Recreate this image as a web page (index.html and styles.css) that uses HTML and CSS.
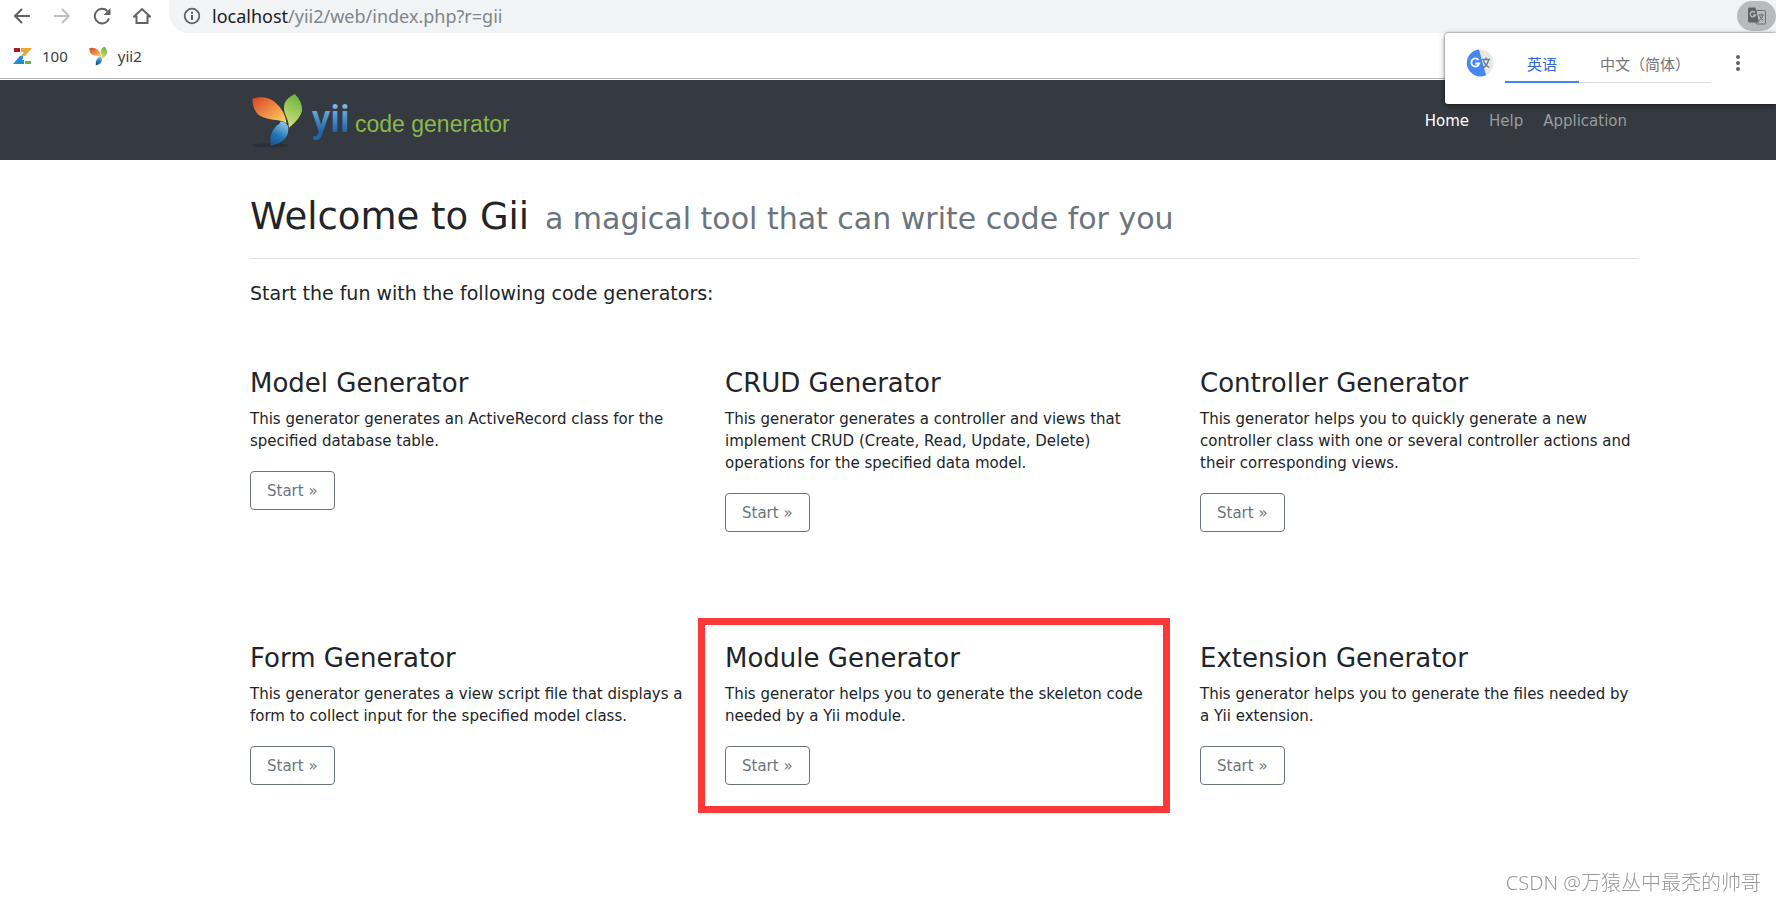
FILE: index.html
```html
<!DOCTYPE html>
<html lang="en">
<head>
    <meta charset="utf-8">
    <title>Welcome to Gii</title>
    <link rel="stylesheet" href="styles.css">
</head>
<body>
    <header class="browser">
        <div class="toolbar">
            <button class="tool" aria-label="Back">
                <svg width="18" height="18" viewBox="0 0 18 18" fill="none" stroke="#5f6368" stroke-width="2"><path d="M17 9H2M9 2L2 9l7 7"/></svg>
            </button>
            <button class="tool" aria-label="Forward">
                <svg width="18" height="18" viewBox="0 0 18 18" fill="none" stroke="#bdc1c6" stroke-width="2"><path d="M1 9h15M9 2l7 7-7 7"/></svg>
            </button>
            <button class="tool" aria-label="Reload">
                <svg width="18" height="18" viewBox="0 0 18 18"><path d="M16 11.5A7.3 7.3 0 1 1 14.300 4" fill="none" stroke="#5f6368" stroke-width="2"/><path d="M17.500 1v7h-7z" fill="#5f6368"/></svg>
            </button>
            <button class="tool" aria-label="Home">
                <svg width="18" height="18" viewBox="0 0 18 18" fill="none" stroke="#5f6368" stroke-width="2"><path d="M1 9.500L9 2l8 7.500H14.500V16h-11V9.500z"/></svg>
            </button>
            <div class="address">
                <svg width="18" height="18" viewBox="0 0 18 18"><circle cx="9" cy="9" r="7.300" fill="none" stroke="#5f6368" stroke-width="1.800"/><path d="M8 8h2v5H8zM8 4.800h2v2H8z" fill="#5f6368"/></svg>
                <span class="url"><span class="host">localhost</span>/yii2/web/index.php?r=gii</span>
                <button class="translate-toggle" aria-label="Translate this page">
                    <svg width="18" height="18" viewBox="0 0 18 18"><rect x="8" y="3.500" width="9.500" height="13.500" rx="1" fill="none" stroke="#6b6e72"/><path d="M1.500 0.500H7.500L11 15.500H1.500Q0 15.500 0 14V2Q0 .5 1.500 .5z" fill="#5f6368"/><path d="M7 5.500A2.700 2.700 0 1 0 7.500 8H5" fill="none" stroke="#b8babd" stroke-width="1.300"/><path d="M10.500 8H16M13.200 6.500V8M15 8q-1 4-4 5.500M11.500 8.500q1 3 4 5" fill="none" stroke="#6b6e72"/></svg>
                </button>
            </div>
        </div>
        <nav class="bookmarks">
            <a href="#">
                <svg width="20" height="20" viewBox="0 0 20 20"><path d="M2 2h6v4H2z" fill="#b0191e"/><path d="M9 2h11L13 10H9l3-4H9z" fill="#eaa82c"/><path d="M8 10h3v2l-1 2h2v4H1z" fill="#268ccb"/><path d="M13 15h6v3h-6z" fill="#6db33f"/></svg>
                100
            </a>
            <a href="#">
                <svg width="20" height="20" viewBox="32 50 156 166"><use href="#yii-mark"/></svg>
                yii2
            </a>
        </nav>
        <div class="translate">
            <svg width="28" height="28" viewBox="0 0 28 28"><circle cx="14" cy="14" r="13.500" fill="#e8e8e8"/><path d="M13 .5A13.500 13.500 0 1 0 20 26.200z" fill="#4687f4"/><path d="M12.500 11A4 4 0 1 0 13.200 14.500H9.500" fill="none" stroke="#fff" stroke-width="1.800"/><path d="M16 10.500h8M20 8.500v2M22.500 11q-1 5-5.500 8M17.500 11.500q1.500 5 6 7" fill="none" stroke="#607d8b" stroke-width="1.300"/></svg>
            <div class="languages">
                <button class="language selected">英语</button>
                <button class="language">中文（简体）</button>
            </div>
            <button class="more" aria-label="More options">
                <svg width="6" height="18" viewBox="0 0 6 18" fill="#5f6368"><circle cx="3" cy="3" r="2"/><circle cx="3" cy="9" r="2"/><circle cx="3" cy="15" r="2"/></svg>
            </button>
        </div>
    </header>

    <nav class="navbar">
        <a class="brand" href="#" aria-label="Yii code generator">
            <svg width="270" height="60" viewBox="30 43 810 180">
                <defs>
                    <linearGradient id="orange" x1="0" y1="0" x2="1" y2="1"><stop offset="0" stop-color="#d8421f"/><stop offset=".5" stop-color="#ee8c45"/><stop offset="1" stop-color="#fbdc65"/></linearGradient>
                    <linearGradient id="green" x1="0.600" y1="0" x2="0.300" y2="1"><stop offset="0" stop-color="#6cb33e"/><stop offset="1" stop-color="#d4e27c"/></linearGradient>
                    <linearGradient id="blue" x1="0.700" y1="0" x2="0.300" y2="1"><stop offset="0" stop-color="#8cc6e8"/><stop offset=".6" stop-color="#2374b5"/><stop offset="1" stop-color="#12599c"/></linearGradient>
                    <linearGradient id="word" x1="0" y1="0" x2="0" y2="1"><stop offset=".2" stop-color="#79b9e4"/><stop offset=".8" stop-color="#1d66aa"/></linearGradient>
                    <g id="yii-mark">
                        <path d="M37 69Q78 57 105 80Q134 104 140 143Q130 136 113 134Q72 130 56 118Q38 102 37 69z" fill="url(#orange)"/>
                        <path d="M164 55Q188 78 186 105Q183 126 147 156Q147 140 138 121Q128 102 134 83Q140 67 164 55z" fill="url(#green)"/>
                        <path d="M122 137Q143 140 145 157Q146 180 130 193Q118 204 92 211Q88 180 99 164Q106 150 118 144z" fill="url(#blue)"/>
                    </g>
                </defs>
                <ellipse cx="92" cy="209" rx="56" ry="6" fill="#2b2f34"/>
                <use href="#yii-mark"/>
                <text class="word-yii" x="215" y="168" fill="url(#word)">yii</text>
                <text class="word-code" x="345" y="168">code generator</text>
            </svg>
        </a>
        <div class="menu">
            <a class="active" href="#">Home</a>
            <a href="#">Help</a>
            <a href="#">Application</a>
        </div>
    </nav>

    <main class="container">
        <div class="page-header">
            <h1>Welcome to Gii <small>a magical tool that can write code for you</small></h1>
        </div>
        <p class="lead">Start the fun with the following code generators:</p>

        <div class="generators">
            <div class="generator">
                <h3>Model Generator</h3>
                <p>This generator generates an ActiveRecord class for the specified database table.</p>
                <a class="btn" href="#">Start »</a>
            </div>
            <div class="generator">
                <h3>CRUD Generator</h3>
                <p>This generator generates a controller and views that implement CRUD (Create, Read, Update, Delete) operations for the specified data model.</p>
                <a class="btn" href="#">Start »</a>
            </div>
            <div class="generator">
                <h3>Controller Generator</h3>
                <p>This generator helps you to quickly generate a new controller class with one or several controller actions and their corresponding views.</p>
                <a class="btn" href="#">Start »</a>
            </div>
            <div class="generator">
                <h3>Form Generator</h3>
                <p>This generator generates a view script file that displays a form to collect input for the specified model class.</p>
                <a class="btn" href="#">Start »</a>
            </div>
            <div class="generator highlight">
                <h3>Module Generator</h3>
                <p>This generator helps you to generate the skeleton code needed by a Yii module.</p>
                <a class="btn" href="#">Start »</a>
            </div>
            <div class="generator">
                <h3>Extension Generator</h3>
                <p>This generator helps you to generate the files needed by a Yii extension.</p>
                <a class="btn" href="#">Start »</a>
            </div>
        </div>
    </main>

    <div class="watermark">CSDN @万猿丛中最秃的帅哥</div>
</body>
</html>
```
FILE: styles.css
```css
* {
    box-sizing: border-box;
}
body {
    margin: 0;
    background-color: #fff;
    color: #212529;
    font-family: "DejaVu Sans", Verdana, sans-serif;
    font-size: 15px;
    line-height: 22px;
}
button {
    border: 0;
    padding: 0;
    background: none;
    font: inherit;
}
a {
    text-decoration: none;
}
svg {
    display: block;
    flex-shrink: 0;
}
/* Browser bars */
.browser {
    position: relative;
    height: 80px;
    border-bottom: 1px solid #fff;
    box-shadow: inset 0 -1px #b6b4b6;
    font-family: "Noto Sans", "Noto Sans CJK SC", sans-serif;
}
.toolbar {
    display: flex;
    height: 33px;
    padding-left: 13px;
    gap: 22px;
}
.tool {
    width: 18px;
    padding-bottom: 2px;
}
.address {
    flex: 1;
    display: flex;
    align-items: center;
    gap: 11px;
    margin-left: -4px;
    padding: 0 0 2px 14px;
    border-radius: 0 0 0 20px;
    background-color: #f1f3f4;
}
.url {
    flex: 1;
    color: #80868b;
    font-size: 18px;
}
.host {
    color: #202124;
}
.translate-toggle {
    width: 39px;
    height: 30px;
    padding-left: 11px;
    border-radius: 15px;
    background-color: #b8babd;
}
.bookmarks {
    display: flex;
    gap: 20px;
    padding: 12px;
}
.bookmarks a {
    display: flex;
    align-items: center;
    gap: 10px;
    color: #3c4043;
    font-size: 15px;
}
.translate {
    position: absolute;
    top: 33px;
    right: 0;
    z-index: 2;
    display: flex;
    width: 331px;
    height: 71px;
    padding: 16px 0 0 21px;
    border-radius: 3px 0 0 3px;
    background-color: #fff;
    box-shadow: 0 0 2px rgba(0, 0, 0, 0.6), 0 2px 6px rgba(0, 0, 0, 0.4);
}
.languages {
    display: flex;
    height: 34px;
    margin: 0 24px 0 11px;
}
.language {
    padding: 0 21px 3px;
    border-bottom: 1px solid #dadce0;
    color: #757575;
    font-size: 15px;
}
.selected {
    padding: 0 22px 2px;
    border-bottom: 2px solid #4285f4;
    color: #3367d6;
}
.more {
    height: 28px;
}
/* Gii navbar */
.navbar {
    display: flex;
    align-items: center;
    justify-content: space-between;
    height: 80px;
    padding: 0 149px 0 250px;
    background-color: #343a40;
}
.word-yii {
    font: 500 114px Roboto, sans-serif;
}
.word-code {
    font: 69px "Liberation Sans", sans-serif;
    fill: #8ab94a;
}
.menu {
    display: flex;
    gap: 20px;
    padding-top: 2px;
}
.menu a {
    color: #999c9f;
}
.menu .active {
    color: #fff;
}
/* Content */
.container {
    padding: 33px 138px 0 250px;
}
.page-header {
    padding-bottom: 15px;
    border-bottom: 1px solid #dee2e6;
}
h1 {
    margin: 0;
    font-size: 37px;
    font-weight: 400;
    line-height: 48px;
}
h1 small {
    margin-left: 4px;
    color: #6c757d;
    font-size: 30px;
}
.lead {
    margin: 20px 0 60px;
    font-size: 19px;
    line-height: 28px;
}
.generators {
    display: grid;
    grid-template-columns: repeat(3, 1fr);
    grid-auto-rows: 195px;
    gap: 80px 37px;
}
h3 {
    margin: 0 0 9px;
    font-size: 26px;
    font-weight: 400;
    line-height: 32px;
}
.generator p {
    margin: 0 0 19px;
}
.btn {
    display: inline-block;
    padding: 10px 16px 8px;
    border: 1px solid #6c757d;
    border-radius: 4px;
    color: #6c757d;
    line-height: 19px;
}
.highlight {
    margin: -24px -7px 24px -27px;
    padding: 17px 0 0 20px;
    border: 7px solid #fc3838;
}
.watermark {
    position: fixed;
    right: 15px;
    bottom: 6px;
    color: #999;
    font-family: "Noto Sans", "Noto Sans CJK SC", sans-serif;
    font-size: 20px;
    font-weight: 300;
    line-height: 28px;
}
```
